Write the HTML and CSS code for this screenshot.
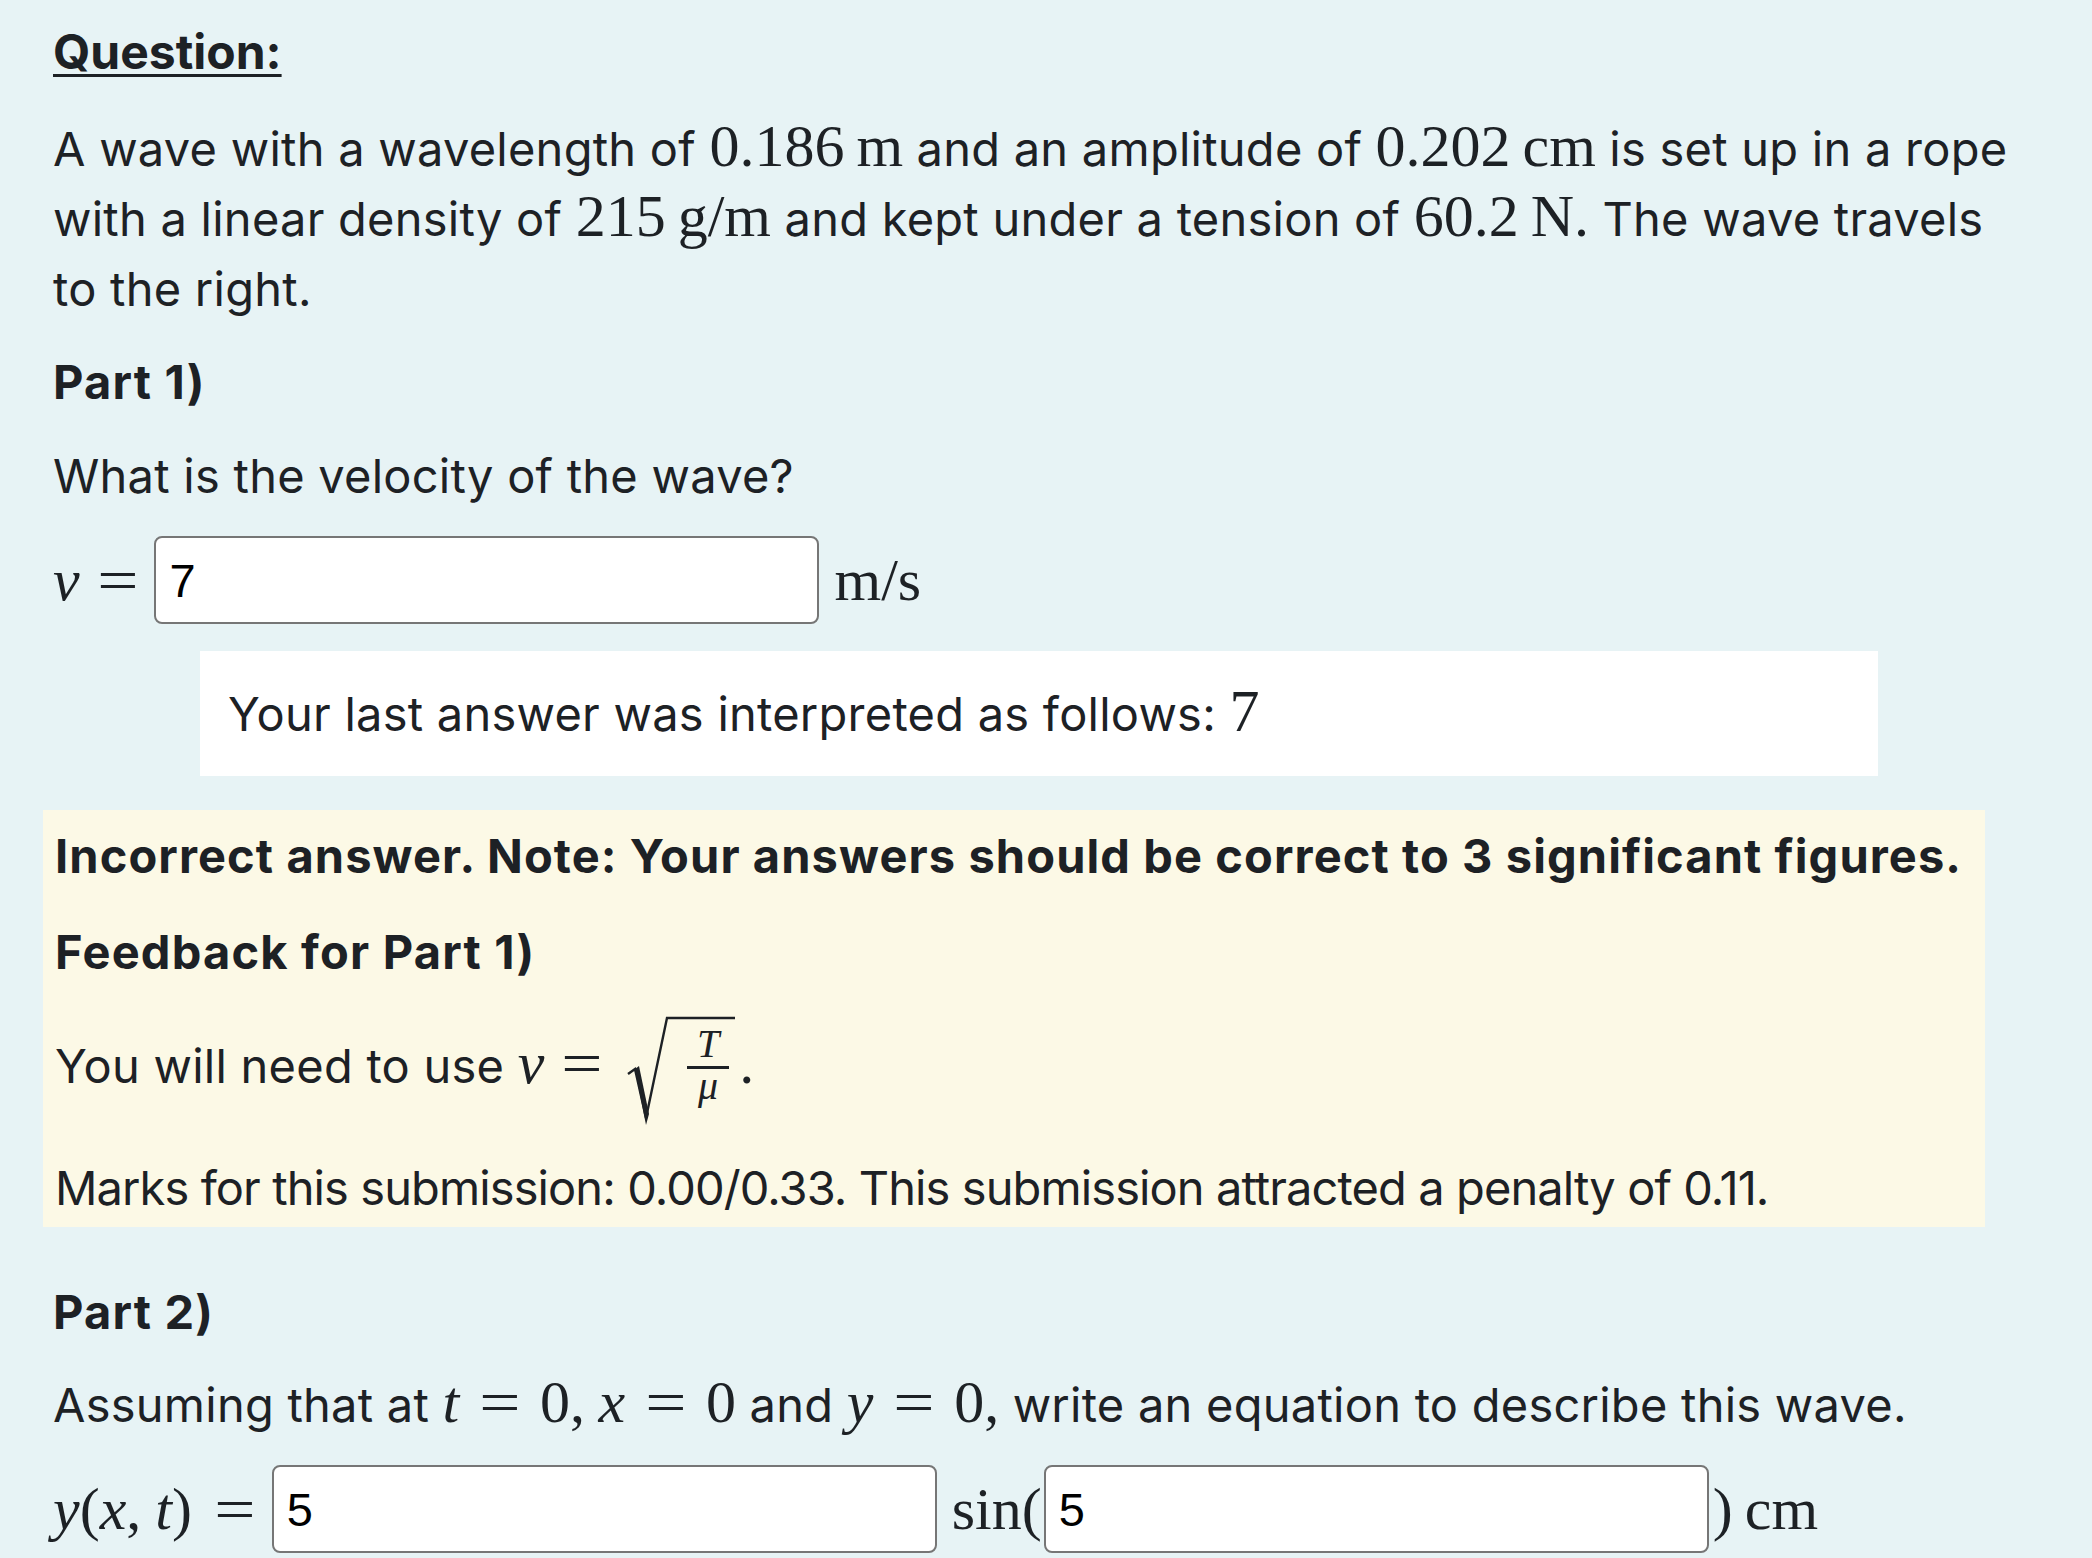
FILE: index.html
```html
<!DOCTYPE html>
<html lang="en">
<head>
<meta charset="UTF-8" />
<title>Question</title>
<link rel="stylesheet" href="styles.css">
</head>
<body>

<div class="que">
  <h2 class="qhead">Question:</h2>

  <p class="txt">A wave with a wavelength of <span class="m">0.186&#8201;m</span> and an amplitude of <span class="m">0.202&#8201;cm</span> is set up in a rope<br>with a linear density of <span class="m">215&#8201;g/m</span> and kept under a tension of <span class="m">60.2&#8201;N.</span> The wave travels<br>to the right.</p>

  <h4 class="part">Part 1)</h4>
  <p class="txt">What is the velocity of the wave?</p>

  <div class="ansrow">
    <span class="m"><i>v</i><span class="eq">=</span></span>
    <input class="ans" type="text" value="7">
    <span class="m unit">m/s</span>
  </div>

  <div class="validation">
    <p class="txt">Your last answer was interpreted as follows: <span class="m">7</span></p>
  </div>

  <div class="feedback">
    <p class="txt bold">Incorrect answer. Note: Your answers should be correct to 3 significant figures.</p>
    <h4 class="part">Feedback for Part 1)</h4>
    <p class="txt hint">You will need to use <span class="m"><i>v</i><span class="eq">=</span></span><span class="sqrt">
        <svg class="rad" width="112" height="113" viewBox="0 0 112 113">
          <path d="M1 60 L8 55 L19 104 L40 4 L108 4" fill="none" stroke="#1d2125" stroke-width="2.4" stroke-linejoin="miter"/>
          <path d="M8 55 L12 52 L22 100 L19 111 Z" fill="#1d2125"/>
        </svg>
        <span class="num">T</span>
        <span class="bar"></span>
        <span class="den">μ</span>
      </span><span class="m">.</span></p>
    <p class="txt marks">Marks for this submission: 0.00/0.33. This submission attracted a penalty of 0.11.</p>
  </div>

  <h4 class="part gap">Part 2)</h4>
  <p class="txt assume">Assuming that at <span class="m"><i>t</i><span class="eq">=</span>0,</span> <span class="m"><i>x</i><span class="eq">=</span>0</span> and <span class="m"><i>y</i><span class="eq">=</span>0,</span> write an equation to describe this wave.</p>

  <div class="ansrow">
    <span class="m fn"><i>y</i>(<i>x</i>,<span class="thin"></span><i>t</i>)<span class="eq">=</span></span>
    <input class="ans" type="text" value="5">
    <span class="m unit">sin(</span>
    <input class="ans second" type="text" value="5">
    <span class="m close">)&#8201;cm</span>
  </div>
</div>

</body>
</html>
```

FILE: styles.css
```css
body {
  margin: 0;
  background-color: #e7f3f5;
  color: #1d2125;
  font-family: Inter, "Noto Sans", sans-serif;
}
.que {
  padding: 22px 0 0 53px;
}
.qhead {
  margin: 0;
  font-size: 48px;
  line-height: 60px;
  font-weight: 700;
  text-decoration: underline;
  text-decoration-thickness: 3px;
  text-underline-offset: 5px;
}
.txt {
  margin: 0;
  font-size: 47px;
  line-height: 70px;
  letter-spacing: 0.25px;
  white-space: nowrap;
}
.qhead + .txt {
  margin-top: 32px;
}
.part {
  margin: 23px 0 0 0;
  font-size: 47px;
  line-height: 70px;
  font-weight: 700;
  letter-spacing: 1.2px;
}
.part + .txt {
  margin-top: 24px;
}
.bold {
  font-weight: 700;
  letter-spacing: 1.1px;
}
.marks {
  letter-spacing: -0.9px;
}
.m {
  font-family: "Liberation Serif", "Times New Roman", serif;
  font-size: 60px;
  line-height: 1;
  letter-spacing: 0;
}
.m i {
  font-style: italic;
}
.eq {
  display: inline-block;
  margin: 0 20px 0 21px;
  transform: scaleX(1.22);
}
.assume .eq {
  margin: 0 23px 0 24px;
}
.fn .eq {
  margin-left: 26px;
}
.thin {
  display: inline-block;
  width: 14px;
}
.ansrow {
  display: flex;
  align-items: center;
  height: 88px;
  margin-top: 25px;
}
.ans {
  box-sizing: border-box;
  width: 665px;
  height: 88px;
  margin: 0;
  padding: 0 13px;
  border: 2px solid #767676;
  border-radius: 8px;
  background: #fff;
  color: #000;
  font-family: "Liberation Sans", Arial, sans-serif;
  font-size: 47px;
}
.unit {
  margin-left: 15px;
}
.ans.second {
  margin-left: 2px;
}
.close {
  margin-left: 4px;
}
.validation {
  width: 1678px;
  box-sizing: border-box;
  margin: 27px 0 0 147px;
  padding: 28px 28px 27px;
  background: #fff;
}
.feedback {
  width: 1942px;
  box-sizing: border-box;
  margin: 34px 0 0 -10px;
  padding: 11px 12px 4px;
  background: #fcf9e6;
}
.feedback .part {
  margin-top: 26px;
}
.feedback .part + .txt {
  margin-top: 27px;
}
.hint + .txt {
  margin-top: 26px;
}
.sqrt {
  position: relative;
  display: inline-block;
  width: 112px;
  height: 113px;
  margin-left: 8px;
  vertical-align: -44px;
}
.rad {
  position: absolute;
  left: 0;
  top: 0;
}
.num, .den {
  position: absolute;
  left: 60px;
  width: 42px;
  text-align: center;
  font-family: "Liberation Serif", "Times New Roman", serif;
  font-style: italic;
  font-size: 40px;
  line-height: 40px;
}
.num {
  top: 10px;
}
.den {
  top: 52px;
}
.bar {
  position: absolute;
  left: 60px;
  top: 52px;
  width: 42px;
  height: 3px;
  background: #1d2125;
}
.part.gap {
  margin-top: 50px;
}
.part.gap + .txt {
  margin-top: 23px;
}
.txt + .ansrow {
  margin-top: 27px;
}
.part + .txt + .ansrow {
  margin-top: 25px;
}
```
